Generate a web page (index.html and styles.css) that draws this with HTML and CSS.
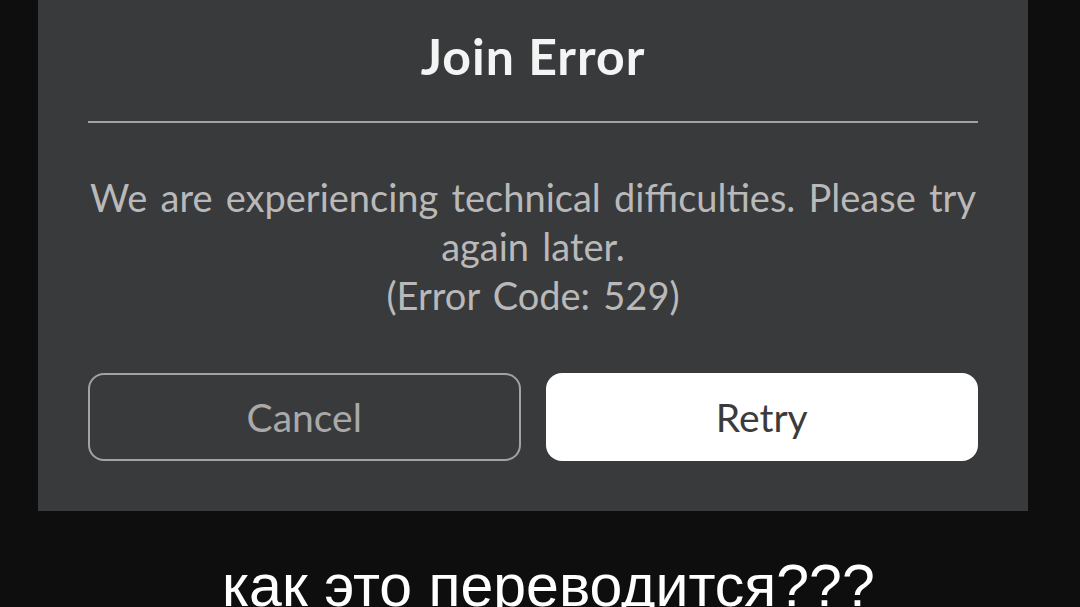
FILE: index.html
```html
<!DOCTYPE html>
<html lang="ru">
<head>
    <meta charset="UTF-8">
    <meta name="viewport" content="width=device-width, initial-scale=1.0">
    <title>Join Error</title>
    <link rel="stylesheet" href="styles.css">
</head>
<body>

    <section class="dialog">
        <!-- Header -->
        <h1 class="title">Join Error</h1>
        <div class="divider"></div>

        <!-- Message -->
        <p class="message">
            We are experiencing technical difficulties. Please try<br>
            again later.<br>
            (Error Code: 529)
        </p>

        <!-- Actions -->
        <div class="actions">
            <button class="button cancel">Cancel</button>
            <button class="button retry">Retry</button>
        </div>
    </section>

    <p class="caption">как это переводится???</p>

</body>
</html>
```

FILE: styles.css
```css
/* Reset some default browser styles */
* {
    margin: 0;
    padding: 0;
    box-sizing: border-box;
}

body {
    width: 1080px;
    height: 607px;
    overflow: hidden;
    background-color: #0e0e0e;
    font-family: Lato, "Liberation Sans", sans-serif;
}

.dialog {
    width: 990px;
    height: 511px;
    margin-left: 38px;
    padding: 26px 50px 0 50px;
    background-color: #393a3c;
    display: flex;
    flex-direction: column;
}

.title {
    height: 60px;
    line-height: 60px;
    font-size: 50px;
    font-weight: 700;
    letter-spacing: 1px;
    color: #f4f4f4;
    text-align: center;
}

.divider {
    height: 2px;
    margin-top: 35px;
    background-color: #a3a3a5;
}

.message {
    margin-top: 50px;
    font-size: 38px;
    line-height: 49px;
    word-spacing: 3.5px;
    color: #b9b9ba;
    text-align: center;
}

.actions {
    margin-top: 53px;
    display: grid;
    grid-template-columns: 1fr 1fr;
    gap: 25px;
}

.button {
    height: 88px;
    border-radius: 16px;
    font-family: Lato, "Liberation Sans", sans-serif;
    font-size: 39px;
    cursor: pointer;
}

.button.cancel {
    background-color: transparent;
    border: 2px solid #a3a3a5;
    color: #a9a9aa;
}

.button.retry {
    background-color: #ffffff;
    border: none;
    color: #3a3b3d;
}

.caption {
    margin-top: 42px;
    padding-left: 222px;
    font-family: "Liberation Sans", Arial, sans-serif;
    font-size: 59px;
    line-height: 66px;
    color: #ffffff;
    white-space: nowrap;
}
```
